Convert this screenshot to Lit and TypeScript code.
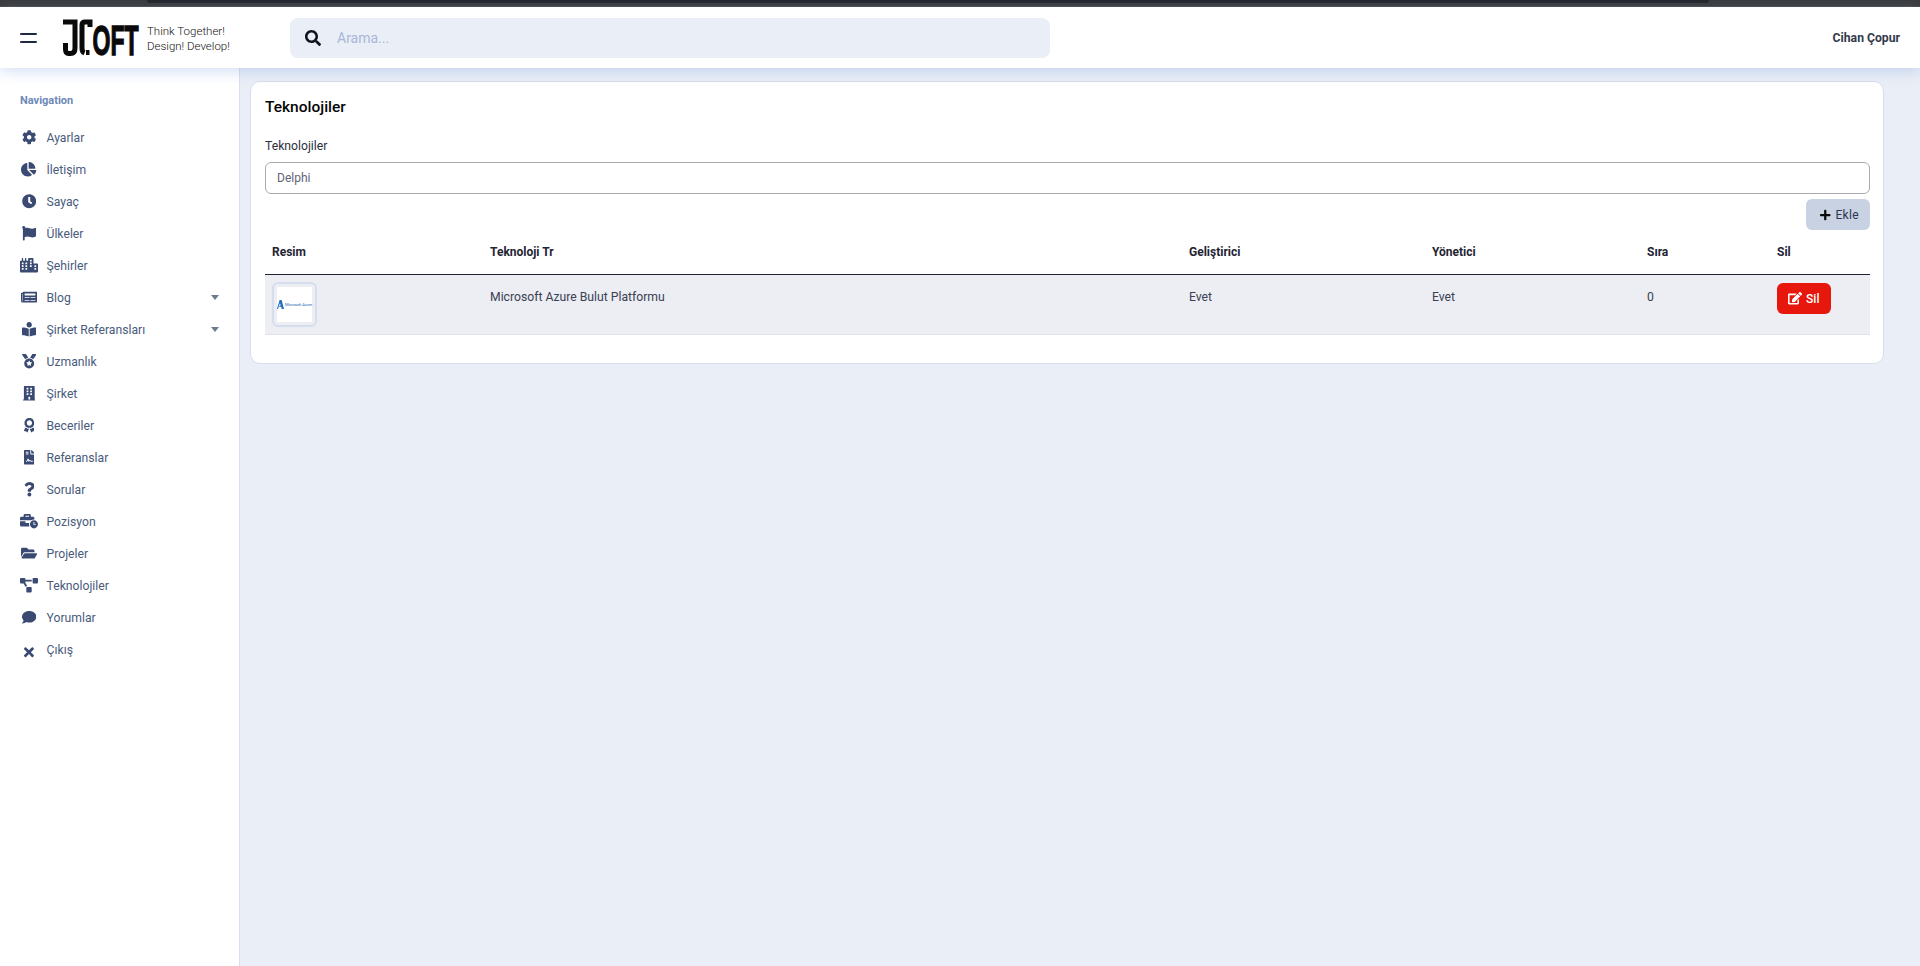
import { LitElement, html, css, svg } from "lit";
import { customElement } from "lit/decorators.js";

const ICONS: Record<string, [number, string]> = {
  cog: [512, "M487.4 315.7l-42.6-24.6c4.3-23.2 4.3-47 0-70.2l42.6-24.6c4.9-2.8 7.1-8.6 5.5-14-11.1-35.6-30-67.8-54.7-94.6-3.8-4.1-10-5.1-14.8-2.3L380.8 110c-17.9-15.4-38.5-27.3-60.8-35.1V25.8c0-5.6-3.9-10.5-9.4-11.7-36.7-8.2-74.3-7.8-109.2 0-5.5 1.2-9.4 6.1-9.4 11.7V75c-22.2 7.9-42.8 19.8-60.8 35.1L88.7 85.5c-4.9-2.8-11-1.9-14.8 2.3-24.7 26.7-43.6 58.9-54.7 94.6-1.7 5.4.6 11.2 5.5 14L67.3 221c-4.3 23.2-4.3 47 0 70.2l-42.6 24.6c-4.9 2.8-7.1 8.6-5.5 14 11.1 35.6 30 67.8 54.7 94.6 3.8 4.1 10 5.1 14.8 2.3l42.6-24.6c17.9 15.4 38.5 27.3 60.8 35.1v49.2c0 5.6 3.9 10.5 9.4 11.7 36.7 8.2 74.3 7.8 109.2 0 5.5-1.2 9.4-6.1 9.4-11.7v-49.2c22.2-7.9 42.8-19.8 60.8-35.1l42.6 24.6c4.9 2.8 11 1.9 14.8-2.3 24.7-26.7 43.6-58.9 54.7-94.6 1.5-5.5-.7-11.3-5.6-14.1zM256 336c-44.1 0-80-35.9-80-80s35.9-80 80-80 80 35.9 80 80-35.9 80-80 80z"],
  pie: [544, "M527.79 288H290.5l158.03 158.03c6.04 6.04 15.98 6.53 22.19.68 38.7-36.46 65.32-85.61 73.13-140.86 1.34-9.46-6.51-17.85-16.06-17.85zm-15.83-64.8C503.72 103.74 408.26 8.28 288.8.04 279.68-.59 272 7.1 272 16.24V240h223.77c9.14 0 16.82-7.68 16.19-16.8zM224 288V50.71c0-9.55-8.39-17.4-17.84-16.06C86.99 51.49-4.1 155.6.14 280.37 4.5 408.51 114.83 513.59 243.03 511.98c50.4-.63 96.97-16.87 135.26-44.03 7.9-5.6 8.42-17.23 1.57-24.08L224 288z"],
  clock: [512, "M256,8C119,8,8,119,8,256S119,504,256,504,504,393,504,256,393,8,256,8Zm57.1,350.1L224.9,294c-3.1-2.3-4.9-5.9-4.9-9.7V116c0-6.6,5.4-12,12-12h48c6.6,0,12,5.4,12,12V253.7l63.5,46.2c5.4,3.9,6.5,11.4,2.6,16.8l-28.2,38.8c-3.9,5.3-11.4,6.5-16.8,2.6Z"],
  flag: [512, "M349.565 98.783C295.978 98.783 251.721 64 184.348 64c-24.955 0-47.309 4.384-68.045 12.013a55.947 55.947 0 0 0 3.586-23.562C118.117 24.015 94.806 1.206 66.338.048 34.345-1.254 8 24.296 8 56c0 19.026 9.497 35.825 24 45.945V488c0 13.255 10.745 24 24 24h16c13.255 0 24-10.745 24-24v-94.4c28.311-12.064 63.582-22.122 114.435-22.122 53.588 0 97.844 34.783 165.217 34.783 48.169 0 86.667-16.294 122.505-40.858C506.84 359.452 512 349.571 512 339.045v-243.1c0-23.393-24.269-38.87-45.485-29.016-34.338 15.948-76.454 31.854-116.95 31.854z"],
  city: [640, "M616 192H480V24c0-13.26-10.74-24-24-24H312c-13.26 0-24 10.74-24 24v72h-64V16c0-8.84-7.16-16-16-16h-16c-8.84 0-16 7.16-16 16v80h-64V16c0-8.84-7.16-16-16-16H80c-8.84 0-16 7.16-16 16v80H24c-13.26 0-24 10.74-24 24v360c0 17.67 14.33 32 32 32h576c17.67 0 32-14.33 32-32V216c0-13.26-10.75-24-24-24zM128 404c0 6.63-5.37 12-12 12H76c-6.63 0-12-5.37-12-12v-40c0-6.63 5.37-12 12-12h40c6.63 0 12 5.37 12 12v40zm0-96c0 6.63-5.37 12-12 12H76c-6.63 0-12-5.37-12-12v-40c0-6.63 5.37-12 12-12h40c6.63 0 12 5.37 12 12v40zm0-96c0 6.63-5.37 12-12 12H76c-6.63 0-12-5.37-12-12v-40c0-6.63 5.37-12 12-12h40c6.63 0 12 5.37 12 12v40zm128 192c0 6.63-5.37 12-12 12h-40c-6.63 0-12-5.37-12-12v-40c0-6.63 5.37-12 12-12h40c6.63 0 12 5.37 12 12v40zm0-96c0 6.63-5.37 12-12 12h-40c-6.63 0-12-5.37-12-12v-40c0-6.63 5.37-12 12-12h40c6.63 0 12 5.37 12 12v40zm0-96c0 6.63-5.37 12-12 12h-40c-6.63 0-12-5.37-12-12v-40c0-6.63 5.37-12 12-12h40c6.63 0 12 5.37 12 12v40zm160 96c0 6.63-5.37 12-12 12h-40c-6.63 0-12-5.37-12-12v-40c0-6.63 5.37-12 12-12h40c6.63 0 12 5.37 12 12v40zm0-96c0 6.63-5.37 12-12 12h-40c-6.63 0-12-5.37-12-12v-40c0-6.63 5.37-12 12-12h40c6.63 0 12 5.37 12 12v40zm0-96c0 6.63-5.37 12-12 12h-40c-6.63 0-12-5.37-12-12V76c0-6.63 5.37-12 12-12h40c6.63 0 12 5.37 12 12v40zm160 288c0 6.63-5.37 12-12 12h-40c-6.63 0-12-5.37-12-12v-40c0-6.63 5.37-12 12-12h40c6.63 0 12 5.37 12 12v40zm0-96c0 6.63-5.37 12-12 12h-40c-6.63 0-12-5.37-12-12v-40c0-6.63 5.37-12 12-12h40c6.63 0 12 5.37 12 12v40z"],
  news: [576, "M552 64H88c-13.255 0-24 10.745-24 24v8H24c-13.255 0-24 10.745-24 24v272c0 30.928 25.072 56 56 56h472c26.51 0 48-21.49 48-48V88c0-13.255-10.745-24-24-24zM56 400a8 8 0 0 1-8-8V144h16v248a8 8 0 0 1-8 8zm236-16H140c-6.627 0-12-5.373-12-12v-8c0-6.627 5.373-12 12-12h152c6.627 0 12 5.373 12 12v8c0 6.627-5.373 12-12 12zm208 0H348c-6.627 0-12-5.373-12-12v-8c0-6.627 5.373-12 12-12h152c6.627 0 12 5.373 12 12v8c0 6.627-5.373 12-12 12zm-208-96H140c-6.627 0-12-5.373-12-12v-8c0-6.627 5.373-12 12-12h152c6.627 0 12 5.373 12 12v8c0 6.627-5.373 12-12 12zm208 0H348c-6.627 0-12-5.373-12-12v-8c0-6.627 5.373-12 12-12h152c6.627 0 12 5.373 12 12v8c0 6.627-5.373 12-12 12zm0-96H140c-6.627 0-12-5.373-12-12v-40c0-6.627 5.373-12 12-12h360c6.627 0 12 5.373 12 12v40c0 6.627-5.373 12-12 12z"],
  reader: [512, "M352 96c0-53.02-42.98-96-96-96s-96 42.98-96 96 42.98 96 96 96 96-42.98 96-96zM233.59 241.1c-59.33-36.32-155.43-46.3-203.79-49.05C13.55 191.13 0 203.51 0 219.14v222.8c0 14.33 11.59 26.28 26.49 27.05 43.66 2.29 131.99 10.68 193.04 41.43 9.37 4.72 20.48-1.71 20.48-11.87V252.56c-.01-4.67-2.32-8.95-6.42-11.46zm248.61-49.05c-48.35 2.74-144.46 12.73-203.78 49.05-4.1 2.51-6.41 6.96-6.41 11.63v245.79c0 10.19 11.14 16.63 20.54 11.9 61.04-30.72 149.32-39.11 192.97-41.4 14.9-.78 26.49-12.73 26.49-27.06V219.14c-.01-15.63-13.56-28.01-29.81-27.09z"],
  medal: [512, "M223.75 130.75L154.62 15.54A31.997 31.997 0 0 0 127.18 0H16.03C3.08 0-4.5 14.57 2.92 25.18l111.27 158.96c29.72-27.77 67.52-46.83 109.56-53.39zM495.97 0H384.82c-11.24 0-21.66 5.9-27.44 15.54l-69.13 115.21c42.04 6.56 79.84 25.62 109.56 53.38L509.08 25.18C516.5 14.57 508.92 0 495.97 0zM256 160c-97.2 0-176 78.8-176 176s78.8 176 176 176 176-78.8 176-176-78.8-176-176-176zm92.52 157.26l-37.93 36.96 8.97 52.22c1.6 9.36-8.26 16.51-16.65 12.09L256 393.88l-46.9 24.65c-8.4 4.45-18.25-2.74-16.65-12.09l8.97-52.22-37.93-36.96c-6.82-6.64-3.05-18.23 6.35-19.59l52.43-7.64 23.43-47.52c2.11-4.28 6.19-6.39 10.28-6.39 4.11 0 8.22 2.14 10.33 6.39l23.43 47.52 52.43 7.64c9.4 1.36 13.17 12.95 6.35 19.59z"],
  building: [448, "M436 480h-20V24c0-13.255-10.745-24-24-24H56C42.745 0 32 10.745 32 24v456H12c-6.627 0-12 5.373-12 12v20h448v-20c0-6.627-5.373-12-12-12zM128 76c0-6.627 5.373-12 12-12h40c6.627 0 12 5.373 12 12v40c0 6.627-5.373 12-12 12h-40c-6.627 0-12-5.373-12-12V76zm0 96c0-6.627 5.373-12 12-12h40c6.627 0 12 5.373 12 12v40c0 6.627-5.373 12-12 12h-40c-6.627 0-12-5.373-12-12v-40zm52 148h-40c-6.627 0-12-5.373-12-12v-40c0-6.627 5.373-12 12-12h40c6.627 0 12 5.373 12 12v40c0 6.627-5.373 12-12 12zm76 160h-64v-84c0-6.627 5.373-12 12-12h40c6.627 0 12 5.373 12 12v84zm64-172c0 6.627-5.373 12-12 12h-40c-6.627 0-12-5.373-12-12v-40c0-6.627 5.373-12 12-12h40c6.627 0 12 5.373 12 12v40zm0-96c0 6.627-5.373 12-12 12h-40c-6.627 0-12-5.373-12-12v-40c0-6.627 5.373-12 12-12h40c6.627 0 12 5.373 12 12v40zm0-96c0 6.627-5.373 12-12 12h-40c-6.627 0-12-5.373-12-12V76c0-6.627 5.373-12 12-12h40c6.627 0 12 5.373 12 12v40z"],
  award: [384, "M97.12 362.63c-8.69-8.69-4.16-6.24-25.12-11.85-9.51-2.55-17.87-7.45-25.43-13.32L1.2 448.7c-4.39 10.77 3.81 22.47 15.43 22.03l52.69-2.01L105.56 507c8 8.44 22.04 5.81 26.43-4.96l52.05-127.62c-10.84 6.04-22.87 9.58-35.31 9.58-19.5 0-37.82-7.59-51.61-21.37zM382.8 448.7l-45.37-111.24c-7.56 5.88-15.92 10.77-25.43 13.32-21.07 5.64-16.45 3.18-25.12 11.85-13.79 13.78-32.12 21.37-51.62 21.37-12.44 0-24.47-3.55-35.31-9.58L252 502.04c4.39 10.77 18.44 13.4 26.43 4.96l36.25-38.28 52.69 2.01c11.62.44 19.82-11.27 15.43-22.03zM263 340c15.28-15.55 17.03-14.21 38.79-20.14 13.89-3.79 24.75-14.84 28.47-28.98 7.48-28.4 5.54-24.97 25.95-45.75 10.17-10.35 14.14-25.44 10.42-39.58-7.47-28.38-7.48-24.42 0-52.83 3.72-14.14-.25-29.23-10.42-39.58-20.41-20.78-18.47-17.36-25.95-45.75-3.72-14.14-14.58-25.19-28.47-28.98-27.88-7.61-24.52-5.62-44.95-26.41-10.17-10.35-25-14.4-38.89-10.61-27.87 7.6-23.98 7.61-51.9 0-13.89-3.79-28.72.25-38.89 10.61-20.41 20.78-17.05 18.8-44.94 26.41-13.89 3.79-24.75 14.84-28.47 28.98-7.47 28.39-5.54 24.97-25.95 45.75-10.17 10.35-14.15 25.44-10.42 39.58 7.47 28.36 7.48 24.4 0 52.82-3.72 14.14.25 29.23 10.42 39.59 20.41 20.78 18.47 17.35 25.95 45.75 3.72 14.14 14.58 25.19 28.47 28.98C104.6 325.96 106.27 325 121 340c13.23 13.47 33.84 15.88 49.74 5.82a39.676 39.676 0 0 1 42.53 0c15.89 10.06 36.5 7.65 49.73-5.82zM97.66 175.96c0-53.03 42.24-96.02 94.34-96.02s94.34 42.99 94.34 96.02-42.24 96.02-94.34 96.02-94.34-42.99-94.34-96.02z"],
  contract: [384, "M224 136V0H24C10.7 0 0 10.7 0 24v464c0 13.3 10.7 24 24 24h336c13.3 0 24-10.7 24-24V160H248c-13.2 0-24-10.8-24-24zM64 72c0-4.42 3.58-8 8-8h80c4.42 0 8 3.58 8 8v16c0 4.42-3.58 8-8 8H72c-4.42 0-8-3.58-8-8V72zm0 64c0-4.42 3.58-8 8-8h80c4.42 0 8 3.58 8 8v16c0 4.42-3.58 8-8 8H72c-4.42 0-8-3.58-8-8v-16zm192.81 248H304c8.84 0 16 7.16 16 16s-7.16 16-16 16h-47.19c-16.45 0-31.27-9.14-38.64-23.86-2.95-5.92-8.09-6.52-10.17-6.52s-7.22.59-10.02 6.19l-7.67 15.34a15.986 15.986 0 0 1-14.31 8.84c-.38 0-.75-.02-1.14-.05-6.45-.45-12-4.75-14.03-10.89L144 354.59l-10.61 31.88c-5.89 17.66-22.38 29.53-41 29.53H80c-8.84 0-16-7.16-16-16s7.16-16 16-16h12.39c4.83 0 9.11-3.08 10.64-7.66l18.19-54.64c3.3-9.81 12.44-16.41 22.78-16.41s19.48 6.59 22.77 16.41l13.88 41.64c19.77-16.19 54.05-9.7 66 14.16 2.02 4.06 5.96 6.5 10.16 6.5zM377 105L279.1 7c-4.5-4.5-10.6-7-17-7H256v128h128v-6.1c0-6.3-2.5-12.4-7-16.9z"],
  question: [384, "M202.021 0C122.202 0 70.503 32.703 29.914 91.026c-7.363 10.58-5.093 25.086 5.178 32.874l43.138 32.709c10.373 7.865 25.132 6.026 33.253-4.148 25.049-31.381 43.63-49.449 82.757-49.449 30.764 0 68.816 19.799 68.816 49.631 0 22.552-18.617 34.134-48.993 51.164-35.423 19.86-82.299 44.576-82.299 106.405V320c0 13.255 10.745 24 24 24h72.471c13.255 0 24-10.745 24-24v-5.773c0-42.86 125.268-44.645 125.268-160.627C377.504 66.256 286.902 0 202.021 0zM192 373.459c-38.196 0-69.271 31.075-69.271 69.271 0 38.195 31.075 69.27 69.271 69.27s69.271-31.075 69.271-69.271-31.075-69.27-69.271-69.27z"],
  bizTime: [640, "M496 224c-79.59 0-144 64.41-144 144s64.41 144 144 144 144-64.41 144-144-64.41-144-144-144zm64 150.29c0 5.34-4.37 9.71-9.71 9.71h-60.57c-5.34 0-9.71-4.37-9.71-9.71v-76.57c0-5.34 4.37-9.71 9.71-9.71h12.57c5.34 0 9.71 4.37 9.71 9.71V352h38.29c5.34 0 9.71 4.37 9.71 9.71v12.58zM496 192c5.4 0 10.72.33 16 .81V144c0-25.6-22.4-48-48-48h-80V48c0-25.6-22.4-48-48-48H176c-25.6 0-48 22.4-48 48v48H48c-25.6 0-48 22.4-48 48v80h395.12c28.6-20.09 63.35-32 100.88-32zM320 96H192V64h128v32zm6.82 224H208c-8.84 0-16-7.16-16-16v-48H0v144c0 25.6 22.4 48 48 48h291.43C327.1 423.96 320 396.82 320 368c0-16.66 2.48-32.72 6.82-48z"],
  folder: [576, "M572.694 292.093L500.27 416.248A63.997 63.997 0 0 1 444.989 448H45.025c-18.523 0-30.064-20.093-20.731-36.093l72.424-124.155A64 64 0 0 1 152 256h399.964c18.523 0 30.064 20.093 20.73 36.093zM152 224h328v-48c0-26.51-21.49-48-48-48H272l-64-64H48C21.49 64 0 85.49 0 112v278.046l69.077-118.418C86.214 242.25 117.989 224 152 224z"],
  diagram: [640, "M384 320H256c-17.67 0-32 14.33-32 32v128c0 17.67 14.33 32 32 32h128c17.67 0 32-14.33 32-32V352c0-17.67-14.33-32-32-32zM192 32c0-17.67-14.33-32-32-32H32C14.33 0 0 14.33 0 32v128c0 17.67 14.33 32 32 32h95.72l73.16 128.04C211.98 300.98 232.4 288 256 288h.28L192 175.51V128h224V64H192V32zM608 0H480c-17.67 0-32 14.33-32 32v128c0 17.67 14.33 32 32 32h128c17.67 0 32-14.33 32-32V32c0-17.67-14.33-32-32-32z"],
  comment: [512, "M256 32C114.6 32 0 125.1 0 240c0 49.6 21.4 95 57 130.7C44.5 421.1 2.7 466 2.2 466.5c-2.2 2.3-2.8 5.7-1.5 8.7S4.8 480 8 480c66.3 0 116-31.8 140.6-51.4 32.7 12.3 69 19.4 107.4 19.4 141.4 0 256-93.1 256-208S397.4 32 256 32z"],
  times: [352, "M242.72 256l100.07-100.07c12.28-12.28 12.28-32.19 0-44.48l-22.24-22.24c-12.28-12.28-32.19-12.28-44.48 0L176 189.28 75.93 89.21c-12.28-12.28-32.19-12.28-44.48 0L9.21 111.45c-12.28 12.28-12.28 32.19 0 44.48L109.28 256 9.21 356.07c-12.28 12.28-12.28 32.19 0 44.48l22.24 22.24c12.28 12.28 32.2 12.28 44.48 0L176 322.72l100.07 100.07c12.28 12.28 32.2 12.28 44.48 0l22.24-22.24c12.28-12.28 12.28-32.19 0-44.48L242.72 256z"],
  plus: [448, "M416 208H272V64c0-17.67-14.33-32-32-32h-32c-17.67 0-32 14.33-32 32v144H32c-17.67 0-32 14.33-32 32v32c0 17.67 14.33 32 32 32h144v144c0 17.67 14.33 32 32 32h32c17.67 0 32-14.33 32-32V304h144c17.67 0 32-14.33 32-32v-32c0-17.67-14.33-32-32-32z"],
  edit: [576, "M402.6 83.2l90.2 90.2c3.8 3.8 3.8 10 0 13.8L274.4 405.6l-92.8 10.3c-12.4 1.4-22.9-9.1-21.5-21.5l10.3-92.8L388.8 83.2c3.8-3.8 10-3.8 13.8 0zm162-22.9l-48.8-48.8c-15.2-15.2-39.9-15.2-55.2 0l-35.4 35.4c-3.8 3.8-3.8 10 0 13.8l90.2 90.2c3.8 3.8 10 3.8 13.8 0l35.4-35.4c15.2-15.3 15.2-40 0-55.2zM384 346.2V448H64V128h229.8c3.2 0 6.2-1.3 8.5-3.5l40-40c7.6-7.6 2.2-20.5-8.5-20.5H48C21.5 64 0 85.5 0 112v352c0 26.5 21.5 48 48 48h352c26.5 0 48-21.5 48-48V306.2c0-10.7-12.9-16-20.5-8.5l-40 40c-2.2 2.3-3.5 5.3-3.5 8.5z"],
  search: [512, "M505 442.7L405.3 343c-4.5-4.5-10.6-7-17-7H372c27.6-35.3 44-79.7 44-128C416 93.1 322.9 0 208 0S0 93.1 0 208s93.1 208 208 208c48.3 0 92.7-16.4 128-44v16.3c0 6.4 2.5 12.5 7 17l99.7 99.7c9.4 9.4 24.6 9.4 33.9 0l28.3-28.3c9.4-9.4 9.4-24.6.1-34zM208 336c-70.7 0-128-57.2-128-128 0-70.7 57.2-128 128-128 70.7 0 128 57.2 128 128 0 70.7-57.2 128-128 128z"],
};

function icon(name: string, size = 14.4) {
  const [w, d] = ICONS[name];
  return html`<svg class="fa" width=${(w / 512) * size} height=${size} viewBox="0 0 ${w} 512" fill="currentColor" aria-hidden="true">${svg`<path d=${d}></path>`}</svg>`;
}

interface NavItem { icon: string; label: string; caret?: boolean; low?: boolean }

const NAV: NavItem[] = [
  { icon: "cog", label: "Ayarlar" },
  { icon: "pie", label: "İletişim" },
  { icon: "clock", label: "Sayaç" },
  { icon: "flag", label: "Ülkeler" },
  { icon: "city", label: "Şehirler" },
  { icon: "news", label: "Blog", caret: true },
  { icon: "reader", label: "Şirket Referansları", caret: true },
  { icon: "medal", label: "Uzmanlık" },
  { icon: "building", label: "Şirket" },
  { icon: "award", label: "Beceriler" },
  { icon: "contract", label: "Referanslar" },
  { icon: "question", label: "Sorular" },
  { icon: "bizTime", label: "Pozisyon" },
  { icon: "folder", label: "Projeler" },
  { icon: "diagram", label: "Teknolojiler" },
  { icon: "comment", label: "Yorumlar" },
  { icon: "times", label: "Çıkış", low: true },
];

@customElement("app-root")
export class AppRoot extends LitElement {
  static styles = css`
    :host {
      display: flex;
      flex-direction: column;
      height: 966px;
      overflow: hidden;
      background: #eaeef6;
      font-family: Roboto, "Noto Sans", sans-serif;
      font-size: 12px;
      color: #2c3344;
    }
    * { box-sizing: border-box; }
    .fa { display: block; flex: none; }

    .chrome {
      height: 7px;
      flex: none;
      background: #3a3a3a;
      border-bottom: 1px solid #4a4a4a;
      padding: 0 211px 0 147px;
    }
    .chrome div {
      height: 3px;
      background: #232428;
      border-radius: 0 0 6px 6px;
    }

    header {
      position: relative;
      z-index: 2;
      height: 61px;
      flex: none;
      background: #fff;
      display: flex;
      align-items: center;
      padding: 0 20px;
      box-shadow: 0 3px 14px rgba(110, 150, 225, 0.32);
    }
    .burger {
      width: 17px;
      display: flex;
      flex-direction: column;
      gap: 6px;
      margin-right: 26px;
    }
    .burger i {
      display: block;
      height: 2px;
      border-radius: 1px;
      background: #1e2a44;
    }
    .logo { display: block; flex: none; margin-right: 8px; overflow: visible; }
    .logo text {
      font-family: "Liberation Sans", sans-serif;
      font-weight: 700;
      font-size: 44px;
      fill: #0a0a0a;
      stroke: #0a0a0a;
      stroke-width: 1.4px;
    }
    .tag {
      width: 143px;
      flex: none;
      padding-top: 2px;
      font-size: 11.5px;
      line-height: 14.5px;
      font-weight: 300;
      color: #111;
    }
    .search {
      width: 760px;
      height: 40px;
      flex: none;
      border-radius: 8px;
      background: #eaeef6;
      display: flex;
      align-items: center;
      gap: 16px;
      padding: 0 15px;
      color: #10131a;
    }
    .search input {
      flex: 1;
      min-width: 0;
      border: 0;
      outline: 0;
      background: transparent;
      font: 400 14px Roboto, sans-serif;
      padding: 0;
    }
    .search input::placeholder { color: #a9b7d8; opacity: 1; }
    .user {
      margin-left: auto;
      font-weight: 700;
      font-size: 12.2px;
      color: #333a4c;
    }

    .body { flex: 1; display: flex; min-height: 0; }
    nav {
      width: 240px;
      flex: none;
      background: #fff;
      border-right: 1px solid #d9dfee;
      padding-top: 25.5px;
    }
    .nav-title {
      padding: 0 20px;
      height: 14px;
      line-height: 14px;
      font-size: 11px;
      font-weight: 700;
      color: #6d89b8;
      margin-bottom: 14px;
    }
    .item {
      height: 32px;
      display: flex;
      align-items: center;
      gap: 8.5px;
      padding: 0 20px;
      font-size: 12.2px;
      color: #4a5b7c;
    }
    .ic {
      width: 18px;
      flex: none;
      display: flex;
      justify-content: center;
      color: #3a4a72;
    }
    .ic.low { padding-top: 5px; }
    .caret {
      margin-left: auto;
      width: 0;
      height: 0;
      border-left: 4px solid transparent;
      border-right: 4px solid transparent;
      border-top: 5px solid #6d7a90;
    }

    main { flex: 1; min-width: 0; padding: 13px 36px 0 10px; }
    .card {
      background: #fff;
      border: 1px solid #d8deec;
      border-radius: 10px;
      padding: 13px 13px 28px 14px;
    }
    h2 {
      margin: 0;
      font-size: 15.5px;
      font-weight: 500;
      line-height: 24px;
      color: #050505;
    }
    label {
      display: block;
      margin: 19px 0 8px;
      font-size: 12.2px;
      line-height: 16px;
      color: #2b3040;
    }
    .field {
      display: block;
      width: 100%;
      height: 32px;
      border: 1px solid #a9abb0;
      border-radius: 6px;
      padding: 0 11px;
      outline: 0;
      font: 400 12px Roboto, sans-serif;
      color: #5f6478;
      background: #fff;
    }
    .actions {
      display: flex;
      justify-content: flex-end;
      margin-top: 5px;
    }
    .btn {
      height: 31px;
      border: 0;
      border-radius: 6px;
      display: inline-flex;
      align-items: center;
      font: 400 12px Roboto, sans-serif;
    }
    .add {
      width: 64px;
      padding-left: 14px;
      gap: 5px;
      background: #c8d2e3;
      color: #2c3550;
      letter-spacing: 0.3px;
    }
    .add .fa { color: #0a0a0a; }
    .del {
      width: 54px;
      padding-left: 11px;
      gap: 4px;
      background: #e8170e;
      color: #fff;
      font-weight: 500;
    }

    .thead, .trow {
      display: grid;
      grid-template-columns: 218px 699px 243px 215px 130px 1fr;
    }
    .thead {
      height: 45px;
      border-bottom: 1px solid #1f2433;
      align-items: center;
      font-weight: 700;
      font-size: 12px;
      color: #1f2433;
    }
    .thead > div { padding: 0 7px; }
    .trow {
      height: 60px;
      background: #eceef4;
      border-bottom: 1px solid #dfe2ea;
      color: #3a4052;
      font-size: 12.2px;
    }
    .trow > div { padding: 14px 7px 0; line-height: 16px; }
    .trow > .thumb-cell { padding-top: 7px; }
    .trow > .btn-cell { padding-top: 8px; }
    .thumb {
      width: 45px;
      height: 45px;
      border: 2px solid #d5ddee;
      border-radius: 6px;
      padding: 3px;
    }
    .thumb div {
      width: 100%;
      height: 100%;
      background: #fff;
      display: flex;
      align-items: center;
      justify-content: center;
      gap: 1px;
    }
    .thumb span {
      font-size: 4px;
      line-height: 5px;
      letter-spacing: -0.1px;
      color: #2a6db5;
      white-space: nowrap;
    }
  `;

  render() {
    return html`
      <div class="chrome"><div></div></div>
      <header>
        <div class="burger"><i></i><i></i></div>
        <svg class="logo" width="76" height="38" viewBox="0 0 76 38" role="img" aria-label="logo">
          <path d="M0 3H12V29Q12 34.5 7.5 34.5H5.5Q2.5 34.5 2.5 30V24" fill="none" stroke="#0a0a0a" stroke-width="5"/>
          <path d="M27 8V3H22Q19 3 19 6V29Q19 33 21.5 34" fill="none" stroke="#0a0a0a" stroke-width="5"/>
          <rect x="23" y="31" width="3.5" height="5" fill="#0a0a0a"/>
          <text transform="translate(29.5 35.5) scale(.525 .97)">OFT</text>
        </svg>
        <div class="tag">Think Together!<br />Design! Develop!</div>
        <div class="search">
          ${icon("search", 16)}
          <input type="text" placeholder="Arama..." />
        </div>
        <div class="user">Cihan Çopur</div>
      </header>
      <div class="body">
        <nav>
          <div class="nav-title">Navigation</div>
          ${NAV.map(
            (n) => html`<div class="item">
              <span class="ic ${n.low ? "low" : ""}">${icon(n.icon)}</span>
              <span>${n.label}</span>
              ${n.caret ? html`<span class="caret"></span>` : ""}
            </div>`
          )}
        </nav>
        <main>
          <section class="card">
            <h2>Teknolojiler</h2>
            <label>Teknolojiler</label>
            <input class="field" type="text" value="Delphi" />
            <div class="actions">
              <button class="btn add">${icon("plus", 12)}<span>Ekle</span></button>
            </div>
            <div class="thead">
              <div>Resim</div>
              <div>Teknoloji Tr</div>
              <div>Geliştirici</div>
              <div>Yönetici</div>
              <div>Sıra</div>
              <div>Sil</div>
            </div>
            <div class="trow">
              <div class="thumb-cell">
                <div class="thumb">
                  <div>
                    <svg width="7" height="9" viewBox="0 0 7 9"><path d="M2.6 0H4.6L7 9H4.8L4.1 6.8H1.9L3.6 5.2L3 3L1 9H0Z" fill="#1f6fc0"/></svg>
                    <span>Microsoft Azure</span>
                  </div>
                </div>
              </div>
              <div>Microsoft Azure Bulut Platformu</div>
              <div>Evet</div>
              <div>Evet</div>
              <div>0</div>
              <div class="btn-cell">
                <button class="btn del">${icon("edit", 12.5)}<span>Sil</span></button>
              </div>
            </div>
          </section>
        </main>
      </div>
    `;
  }
}
